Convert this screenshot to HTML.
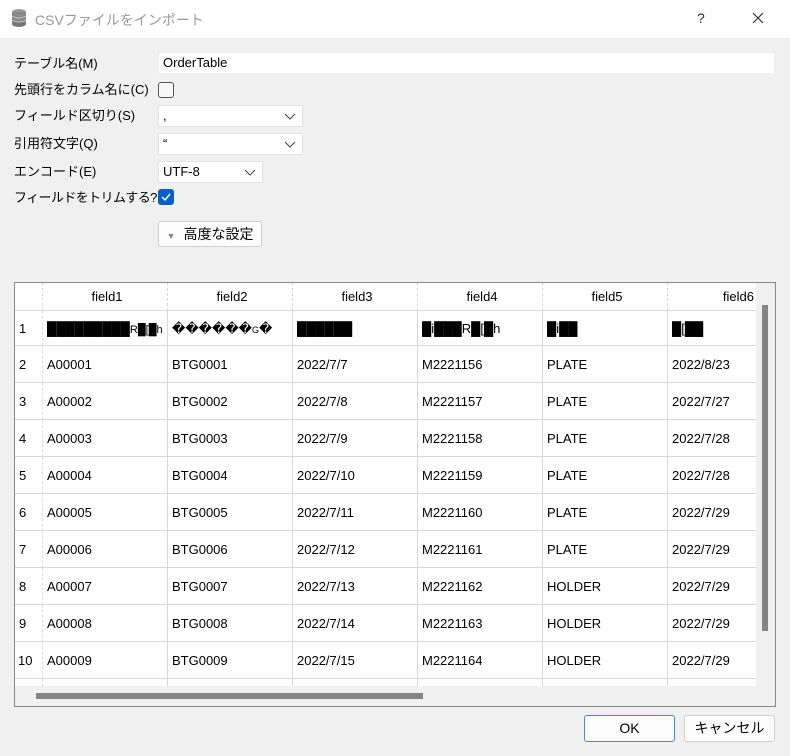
<!DOCTYPE html>
<html><head><meta charset="utf-8"><style>
*{margin:0;padding:0;box-sizing:border-box}
body{width:790px;height:756px;background:#f0f0f0;font-family:"Liberation Sans","Noto Sans CJK JP",sans-serif;font-size:13px;color:#000;position:relative;overflow:hidden}
.a{position:absolute}
.title{left:0;top:0;width:790px;height:38px;background:#fff}
.lbl{left:14px;font-size:13px;line-height:16px}
.inp{background:#fff;border:1px solid #e3e3e3;border-radius:2px;height:22px;padding-left:4px;line-height:20px}
.chev{position:absolute;right:6px;top:5px}
.tbl{left:14px;top:282px;width:762px;height:425px;border:1px solid #888;background:#f0f0f0}
.c{position:absolute;background:#fff;border-right:1px solid #d8d8d8;border-bottom:1px solid #d8d8d8;height:37px;line-height:37px;padding-left:4px;white-space:nowrap;overflow:hidden}
.btn{border:1px solid #d0d0d0;background:#fdfdfd;border-radius:3px;text-align:center;line-height:24px}
</style></head><body>
<div class="a title"></div>
<svg class="a" style="left:10px;top:8px" width="18" height="20" viewBox="0 0 18 20"><ellipse cx="9" cy="4" rx="7" ry="3" fill="#999"/><rect x="2" y="4" width="14" height="12" fill="#888"/><ellipse cx="9" cy="16" rx="7" ry="3" fill="#777"/><path d="M2 8q7 4 14 0M2 12q7 4 14 0" stroke="#ccc" fill="none"/></svg>
<div class="a" style="left:35px;top:10px;color:#999;font-size:14px">CSVファイルをインポート</div>
<div class="a" style="left:697px;top:10px;color:#333;font-size:14px">?</div>
<svg class="a" style="left:752px;top:12px" width="12" height="12"><path d="M1 1l10 10M11 1L1 11" stroke="#333" stroke-width="1.2"/></svg>

<div class="a lbl" style="top:56px">テーブル名(M)</div>
<div class="a inp" style="left:158px;top:52px;width:617px;border-color:#eee">OrderTable</div>
<div class="a lbl" style="top:82px">先頭行をカラム名に(C)</div>
<div class="a" style="left:158px;top:82px;width:16px;height:16px;border:1px solid #555;border-radius:3px;background:#f6f6f6"></div>
<div class="a lbl" style="top:108px">フィールド区切り(S)</div>
<div class="a inp" style="left:158px;top:105px;width:145px">,<svg class="chev" width="12" height="10"><path d="M1 3l5 5 5-5" stroke="#444" fill="none"/></svg></div>
<div class="a lbl" style="top:136px">引用符文字(Q)</div>
<div class="a inp" style="left:158px;top:133px;width:145px">“<svg class="chev" width="12" height="10"><path d="M1 3l5 5 5-5" stroke="#444" fill="none"/></svg></div>
<div class="a lbl" style="top:164px">エンコード(E)</div>
<div class="a inp" style="left:158px;top:161px;width:105px">UTF-8<svg class="chev" width="12" height="10"><path d="M1 3l5 5 5-5" stroke="#444" fill="none"/></svg></div>
<div class="a lbl" style="top:190px;letter-spacing:-0.6px">フィールドをトリムする?</div>
<div class="a" style="left:158px;top:189px;width:16px;height:16px;background:#0a5fc4;border-radius:3px"><svg width="16" height="16"><path d="M4 8l3 3 5-6" stroke="#fff" stroke-width="1.4" fill="none"/></svg></div>
<div class="a btn" style="left:158px;top:221px;width:104px;height:26px;font-size:14px"><span style="color:#888;font-size:9px;margin-right:8px">▼</span>高度な設定</div>

<div class="a tbl">
<div style="position:absolute;left:0;top:0;width:741px;height:403px;overflow:hidden">
<div class="c" style="left:0;top:0;width:28px;height:28px;border-right:1px dashed #ddd"></div>
<div class="c" style="left:28px;top:0;width:125px;height:28px;line-height:28px;text-align:center;border-right-style:dashed">field1</div>
<div class="c" style="left:153px;top:0;width:125px;height:28px;line-height:28px;text-align:center;border-right-style:dashed">field2</div>
<div class="c" style="left:278px;top:0;width:125px;height:28px;line-height:28px;text-align:center;border-right-style:dashed">field3</div>
<div class="c" style="left:403px;top:0;width:125px;height:28px;line-height:28px;text-align:center;border-right-style:dashed">field4</div>
<div class="c" style="left:528px;top:0;width:125px;height:28px;line-height:28px;text-align:center;border-right-style:dashed">field5</div>
<div class="c" style="left:653px;top:0;width:88px;height:28px;line-height:28px;text-align:right;padding-right:2px;border-right:none">field6</div>
<div style="position:absolute;left:0;top:28px;width:760px">
<div class="c" style="left:0;top:0;width:28px;height:35px;line-height:35px;border-right:1px dashed #ddd">1</div>
<div class="c" style="left:28px;top:0;width:125px;height:35px;line-height:35px;font-weight:bold">█████████<span style="font-weight:normal;font-size:11px">R█[█h</span></div>
<div class="c" style="left:153px;top:0;width:125px;height:35px;line-height:35px">������<span style="font-size:9px">G</span>�</div>
<div class="c" style="left:278px;top:0;width:125px;height:35px;line-height:35px">██████</div>
<div class="c" style="left:403px;top:0;width:125px;height:35px;line-height:35px">█i███R█[█h</div>
<div class="c" style="left:528px;top:0;width:125px;height:35px;line-height:35px">█i██</div>
<div class="c" style="left:653px;top:0;width:100px;height:35px;line-height:35px">█[██</div>
</div>
<div id="rows" style="position:absolute;left:0;top:63px;width:760px">
<div style="position:absolute;top:0"><div class="c" style="left:0;width:28px;border-right:1px dashed #ddd">2</div><div class="c" style="left:28px;width:125px">A00001</div><div class="c" style="left:153px;width:125px">BTG0001</div><div class="c" style="left:278px;width:125px">2022/7/7</div><div class="c" style="left:403px;width:125px">M2221156</div><div class="c" style="left:528px;width:125px">PLATE</div><div class="c" style="left:653px;width:100px">2022/8/23</div></div>
<div style="position:absolute;top:37px"><div class="c" style="left:0;width:28px;border-right:1px dashed #ddd">3</div><div class="c" style="left:28px;width:125px">A00002</div><div class="c" style="left:153px;width:125px">BTG0002</div><div class="c" style="left:278px;width:125px">2022/7/8</div><div class="c" style="left:403px;width:125px">M2221157</div><div class="c" style="left:528px;width:125px">PLATE</div><div class="c" style="left:653px;width:100px">2022/7/27</div></div>
<div style="position:absolute;top:74px"><div class="c" style="left:0;width:28px;border-right:1px dashed #ddd">4</div><div class="c" style="left:28px;width:125px">A00003</div><div class="c" style="left:153px;width:125px">BTG0003</div><div class="c" style="left:278px;width:125px">2022/7/9</div><div class="c" style="left:403px;width:125px">M2221158</div><div class="c" style="left:528px;width:125px">PLATE</div><div class="c" style="left:653px;width:100px">2022/7/28</div></div>
<div style="position:absolute;top:111px"><div class="c" style="left:0;width:28px;border-right:1px dashed #ddd">5</div><div class="c" style="left:28px;width:125px">A00004</div><div class="c" style="left:153px;width:125px">BTG0004</div><div class="c" style="left:278px;width:125px">2022/7/10</div><div class="c" style="left:403px;width:125px">M2221159</div><div class="c" style="left:528px;width:125px">PLATE</div><div class="c" style="left:653px;width:100px">2022/7/28</div></div>
<div style="position:absolute;top:148px"><div class="c" style="left:0;width:28px;border-right:1px dashed #ddd">6</div><div class="c" style="left:28px;width:125px">A00005</div><div class="c" style="left:153px;width:125px">BTG0005</div><div class="c" style="left:278px;width:125px">2022/7/11</div><div class="c" style="left:403px;width:125px">M2221160</div><div class="c" style="left:528px;width:125px">PLATE</div><div class="c" style="left:653px;width:100px">2022/7/29</div></div>
<div style="position:absolute;top:185px"><div class="c" style="left:0;width:28px;border-right:1px dashed #ddd">7</div><div class="c" style="left:28px;width:125px">A00006</div><div class="c" style="left:153px;width:125px">BTG0006</div><div class="c" style="left:278px;width:125px">2022/7/12</div><div class="c" style="left:403px;width:125px">M2221161</div><div class="c" style="left:528px;width:125px">PLATE</div><div class="c" style="left:653px;width:100px">2022/7/29</div></div>
<div style="position:absolute;top:222px"><div class="c" style="left:0;width:28px;border-right:1px dashed #ddd">8</div><div class="c" style="left:28px;width:125px">A00007</div><div class="c" style="left:153px;width:125px">BTG0007</div><div class="c" style="left:278px;width:125px">2022/7/13</div><div class="c" style="left:403px;width:125px">M2221162</div><div class="c" style="left:528px;width:125px">HOLDER</div><div class="c" style="left:653px;width:100px">2022/7/29</div></div>
<div style="position:absolute;top:259px"><div class="c" style="left:0;width:28px;border-right:1px dashed #ddd">9</div><div class="c" style="left:28px;width:125px">A00008</div><div class="c" style="left:153px;width:125px">BTG0008</div><div class="c" style="left:278px;width:125px">2022/7/14</div><div class="c" style="left:403px;width:125px">M2221163</div><div class="c" style="left:528px;width:125px">HOLDER</div><div class="c" style="left:653px;width:100px">2022/7/29</div></div>
<div style="position:absolute;top:296px"><div class="c" style="left:0;width:28px;padding-left:3px;border-right:1px dashed #ddd">10</div><div class="c" style="left:28px;width:125px">A00009</div><div class="c" style="left:153px;width:125px">BTG0009</div><div class="c" style="left:278px;width:125px">2022/7/15</div><div class="c" style="left:403px;width:125px">M2221164</div><div class="c" style="left:528px;width:125px">HOLDER</div><div class="c" style="left:653px;width:100px">2022/7/29</div></div>
<div style="position:absolute;top:333px"><div class="c" style="left:0;width:28px;border-right:1px dashed #ddd"></div><div class="c" style="left:28px;width:125px"></div><div class="c" style="left:153px;width:125px"></div><div class="c" style="left:278px;width:125px"></div><div class="c" style="left:403px;width:125px"></div><div class="c" style="left:528px;width:125px"></div><div class="c" style="left:653px;width:100px"></div></div>
</div>
</div>
<div class="a" style="left:747px;top:22px;width:6px;height:326px;background:#858585"></div>
<div class="a" style="left:21px;top:410px;width:387px;height:6px;background:#858585"></div>
</div>

<div class="a btn" style="left:584px;top:715px;width:91px;height:27px;border-color:#3d8ee0;line-height:25px;font-size:14px">OK</div>
<div class="a btn" style="left:684px;top:715px;width:91px;height:27px;line-height:25px;font-size:14px">キャンセル</div>
</body></html>
